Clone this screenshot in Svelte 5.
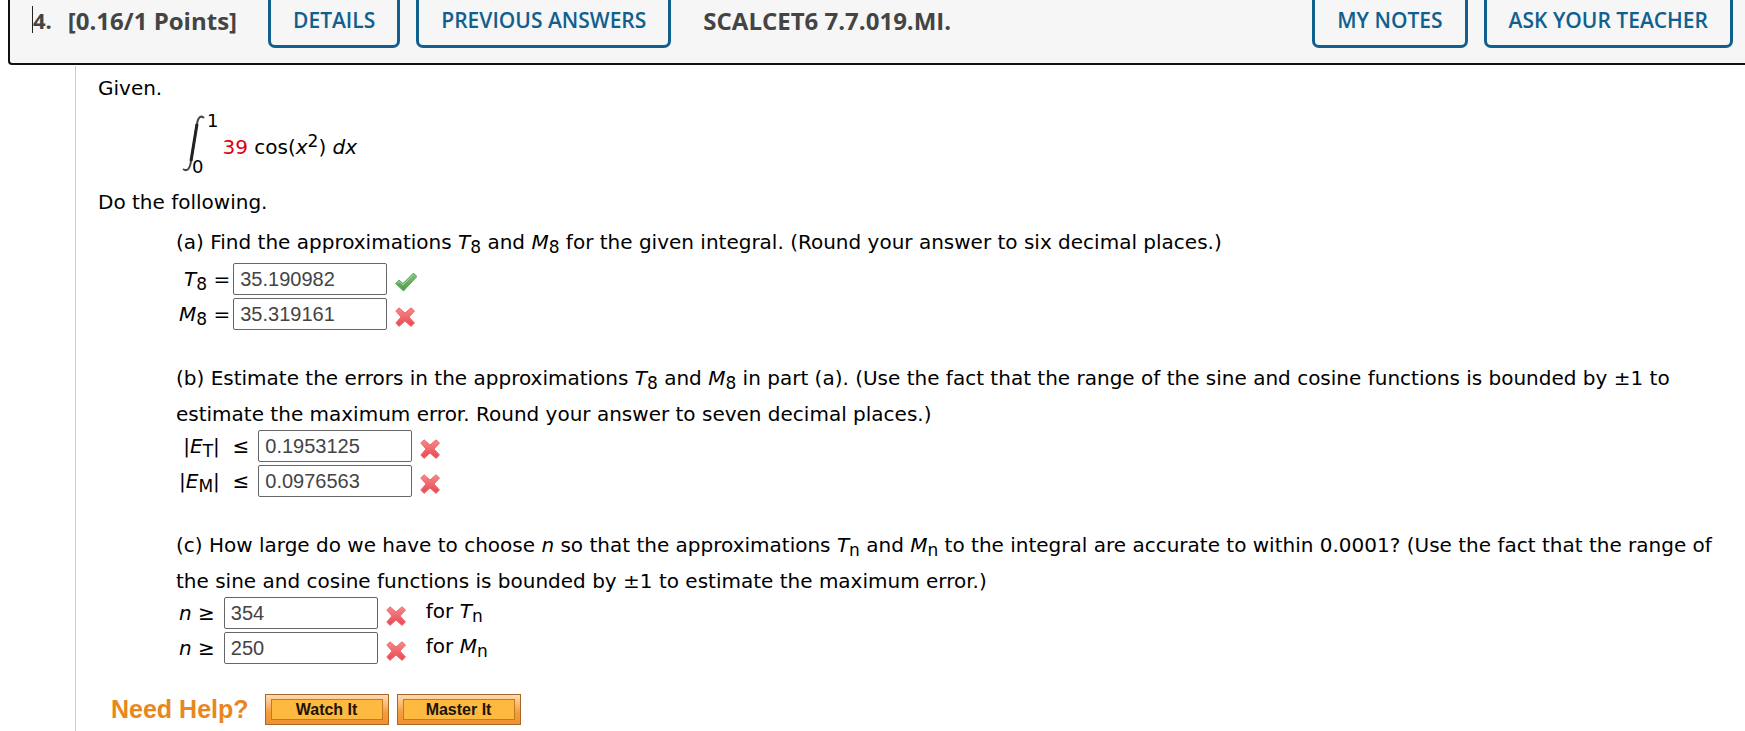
<script>
  let t8 = $state('35.190982')
  let m8 = $state('35.319161')
  let errT = $state('0.1953125')
  let errM = $state('0.0976563')
  let nT = $state('354')
  let nM = $state('250')
</script>

{#snippet correct()}
  <svg class="mark" viewBox="0 0 22 20" role="img" aria-label="correct">
    <defs>
      <linearGradient id="green" x1="0" y1="0" x2="0" y2="1">
        <stop offset="0" stop-color="#7fc27a" />
        <stop offset="1" stop-color="#4f9a4a" />
      </linearGradient>
    </defs>
    <path d="M0.5 11.5 L4 8 L8 11.5 L18.5 1 L22 4.5 L8.5 19 Z" fill="url(#green)" stroke="#6bab66" stroke-width="1" stroke-linejoin="round" />
    <path d="M2 11.3 L4 9.5 L8 13 L18.5 2.6" fill="none" stroke="#9fd49a" stroke-width="1" />
  </svg>
{/snippet}

{#snippet wrong()}
  <svg class="mark" viewBox="0 0 22 20" role="img" aria-label="incorrect">
    <defs>
      <linearGradient id="red" x1="0" y1="0" x2="0" y2="1">
        <stop offset="0" stop-color="#f58a8a" />
        <stop offset="1" stop-color="#ea4650" />
      </linearGradient>
    </defs>
    <path d="M4 0.8 L10 6 L16 0.8 L19.5 4 L14 10 L19.5 16 L16 19.4 L10 14 L4 19.4 L0.8 16 L6 10 L0.8 4 Z" fill="url(#red)" stroke="#f0686c" stroke-width="1" stroke-linejoin="round" />
  </svg>
{/snippet}

<div class="page">
  <header>
    <span class="caret"></span>
    <strong class="number">4.</strong>
    <strong class="points">[0.16/1 Points]</strong>
    <button class="btn">DETAILS</button>
    <button class="btn">PREVIOUS ANSWERS</button>
    <strong class="source">SCALCET6 7.7.019.MI.</strong>
    <button class="btn push">MY NOTES</button>
    <button class="btn">ASK YOUR TEACHER</button>
  </header>

  <main>
    <p>Given.</p>

    <div class="integral">
      <svg class="sign" viewBox="0 0 24 57" aria-hidden="true">
        <path d="M22 3 C19 0 16 2 15 9 L9 46 C8 54 5 57 1 54" fill="none" stroke="#444" stroke-width="2" />
        <path d="M15 9 L9 46" fill="none" stroke="#222" stroke-width="3" />
      </svg>
      <span class="limits"><span class="upper">1</span><span>0</span></span>
      <span class="body"><span class="red">39</span> cos(<i>x</i><sup>2</sup>) <i>dx</i></span>
    </div>

    <p>Do the following.</p>

    <section>
      <p>(a) Find the approximations <i>T</i><sub>8</sub> and <i>M</i><sub>8</sub> for the given integral. (Round your answer to six decimal places.)</p>
      <div class="answers">
        <label for="t8"><i>T</i><sub>8</sub> =</label>
        <input id="t8" type="text" bind:value={t8} />
        {@render correct()}
        <span></span>
        <label for="m8"><i>M</i><sub>8</sub> =</label>
        <input id="m8" type="text" bind:value={m8} />
        {@render wrong()}
        <span></span>
      </div>
    </section>

    <section>
      <p>(b) Estimate the errors in the approximations <i>T</i><sub>8</sub> and <i>M</i><sub>8</sub> in part (a). (Use the fact that the range of the sine and cosine functions is bounded by ±1 to estimate the maximum error. Round your answer to seven decimal places.)</p>
      <div class="answers wide">
        <label for="err-t">|<i>E</i><sub>T</sub>| &nbsp;≤</label>
        <input id="err-t" type="text" bind:value={errT} />
        {@render wrong()}
        <span></span>
        <label for="err-m">|<i>E</i><sub>M</sub>| &nbsp;≤</label>
        <input id="err-m" type="text" bind:value={errM} />
        {@render wrong()}
        <span></span>
      </div>
    </section>

    <section>
      <p>(c) How large do we have to choose <i>n</i> so that the approximations <i>T</i><sub>n</sub> and <i>M</i><sub>n</sub> to the integral are accurate to within 0.0001? (Use the fact that the range of the sine and cosine functions is bounded by ±1 to estimate the maximum error.)</p>
      <div class="answers wide">
        <label for="n-t"><i>n</i> ≥</label>
        <input id="n-t" type="text" bind:value={nT} />
        {@render wrong()}
        <span>for <i>T</i><sub>n</sub></span>
        <label for="n-m"><i>n</i> ≥</label>
        <input id="n-m" type="text" bind:value={nM} />
        {@render wrong()}
        <span>for <i>M</i><sub>n</sub></span>
      </div>
    </section>

    <div class="help">
      <strong>Need Help?</strong>
      <button><span>Watch It</span></button>
      <button><span>Master It</span></button>
    </div>
  </main>
</div>

<style>
  :global(body) { margin: 0; background: #fff; }
  .page { display: flex; flex-direction: column; min-height: 100vh; box-sizing: border-box; padding-left: 8px; font-family: Verdana, 'DejaVu Sans', sans-serif; font-size: 20px; color: #000; }

  header { display: flex; align-items: flex-start; height: 63px; padding: 0 12px 0 22px; background: #f6f6f6; border: solid #111; border-width: 0 0 2px 2px; border-bottom-left-radius: 4px; font-family: 'Open Sans', sans-serif; color: #444; white-space: nowrap; }
  header strong { font-size: 24px; line-height: 42px; }
  header .number { font-size: 22px; line-height: 40px; }
  .caret { width: 1px; height: 27px; margin-top: 6px; background: #222; }
  .points { margin: 0 31px 0 16px; }
  .source { margin-left: 16px; }
  .btn { height: 48px; margin-right: 16px; padding: 0 22px 6px; border: 3px solid #10608f; border-top: 0; border-radius: 0 0 7px 7px; background: transparent; color: #10608f; font-family: inherit; font-size: 21px; font-weight: 600; cursor: pointer; }
  .btn.push { margin-left: auto; }
  .btn:last-child { margin-right: 0; }

  main { flex: 1; margin: 1px 0 0 67px; padding: 4px 16px 6px 22px; border-left: 1px solid #ccc; }
  p { margin: 0; line-height: 36px; }
  sub, sup { font-size: 17px; line-height: 0; }
  sub { vertical-align: -4px; }
  sup { vertical-align: 7px; }

  .integral { display: flex; align-items: flex-start; height: 62px; margin: 9px 0 7px 84px; }
  .sign { width: 24px; height: 57px; }
  .limits { display: flex; flex-direction: column; gap: 26px; margin: -4px 0 0 -14px; font-size: 18px; line-height: 20px; }
  .upper { padding-left: 15px; }
  .integral .body { margin: 14px 0 0 4px; line-height: 36px; }
  .red { color: #e00012; }

  section { margin: 4px 0 29px 78px; }
  .answers { display: grid; grid-template-columns: auto 154px 30px 1fr; grid-auto-rows: 35px; align-items: center; margin-top: 1px; line-height: 32px; }
  .answers label { padding: 0 3px; text-align: right; }
  .answers.wide { margin-top: -4px; }
  .wide label { padding-right: 9px; }
  input { box-sizing: border-box; height: 32px; padding: 1px 6px 0; border: 1px solid #666; border-radius: 2px; background: #fff; color: #444; font-family: 'Liberation Sans', Arial, sans-serif; font-size: 20px; }
  .mark { width: 22px; height: 20px; margin: 7px 0 0 8px; }
  .answers > span { padding: 0 0 4px 18px; }

  .help { display: flex; align-items: center; gap: 8px; margin-left: 13px; font-family: 'Liberation Sans', Arial, sans-serif; }
  .help strong { margin-right: 8px; font-size: 25px; color: #e8871e; }
  .help button { min-width: 124px; height: 31px; padding: 4px 5px; border: 1px solid #a8672a; background: linear-gradient(#ffdcb4, #f79c3c 60%, #ee9130); font-family: inherit; font-size: 16px; font-weight: bold; color: #1e1408; cursor: pointer; }
  .help button span { display: block; border: 1px solid #c47a22; background: #fdb940; line-height: 19px; }
</style>
